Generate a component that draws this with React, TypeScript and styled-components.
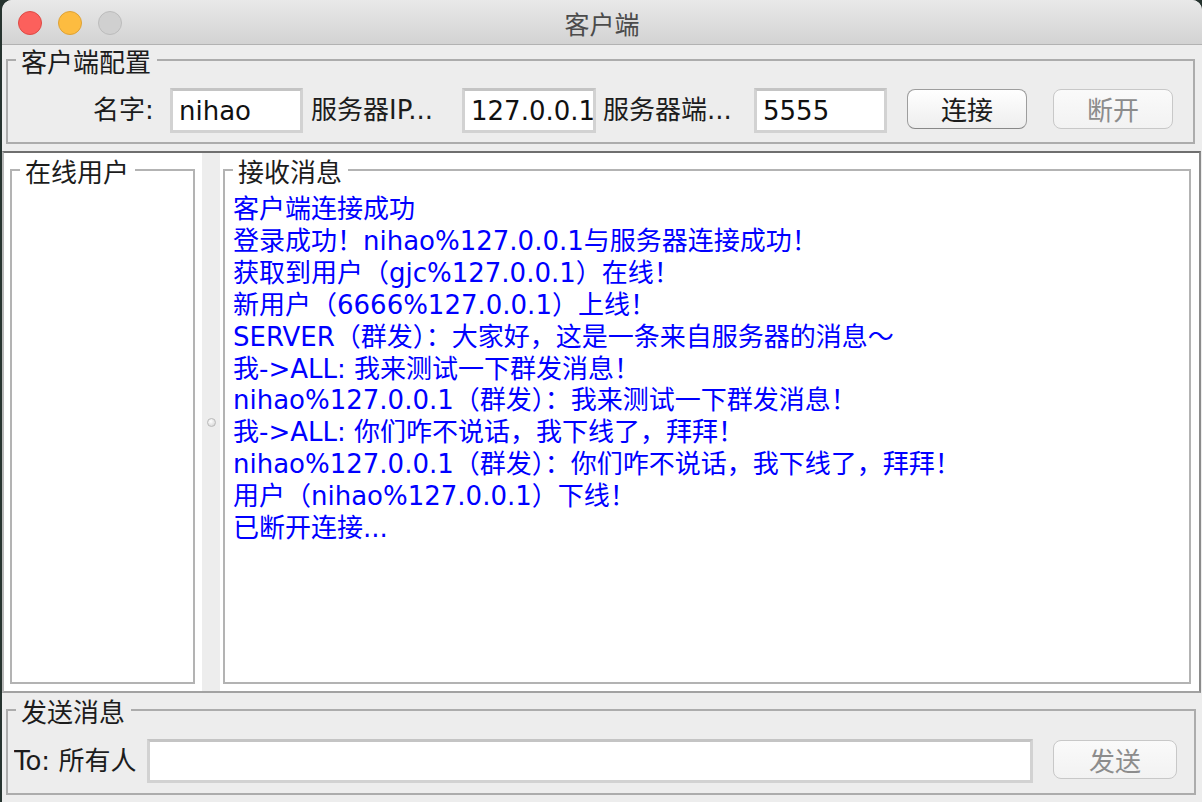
import React from 'react'
import styled, { createGlobalStyle } from 'styled-components'

const GlobalStyle = createGlobalStyle`
    html, body {
        margin: 0;
        padding: 0;
        background: #26332f;
    }
    body {
        font-family: "DejaVu Sans", "Noto Sans CJK SC", sans-serif;
        font-size: 26px;
        color: #1c1c1c;
    }
    * {
        box-sizing: border-box;
    }
`

const messages = [
    '客户端连接成功',
    '登录成功！nihao%127.0.0.1与服务器连接成功！',
    '获取到用户（gjc%127.0.0.1）在线！',
    '新用户（6666%127.0.0.1）上线！',
    'SERVER（群发）：大家好，这是一条来自服务器的消息～',
    '我->ALL: 我来测试一下群发消息！',
    'nihao%127.0.0.1（群发）：我来测试一下群发消息！',
    '我->ALL: 你们咋不说话，我下线了，拜拜！',
    'nihao%127.0.0.1（群发）：你们咋不说话，我下线了，拜拜！',
    '用户（nihao%127.0.0.1）下线！',
    '已断开连接...',
]

export default function App(): JSX.Element {
    return (
        <>
            <GlobalStyle />
            <Window>
                <TitleBar>
                    <Lights>
                        <Light $fill="#fc605c" $edge="#de4a45" />
                        <Light $fill="#fdbc40" $edge="#dea236" />
                        <Light $fill="#d0d0d0" $edge="#bcbcbc" />
                    </Lights>
                    <WindowTitle>客户端</WindowTitle>
                    <span />
                </TitleBar>

                <ConfigBox $bg="#ededed">
                    <BoxTitle $bg="#ededed">客户端配置</BoxTitle>
                    <ConfigRow>
                        <FieldLabel $w={77}>名字:</FieldLabel>
                        <TextInput $w={133} defaultValue="nihao" />
                        <FieldLabel $w={159} $pl={8}>服务器IP...</FieldLabel>
                        <TextInput $w={134} defaultValue="127.0.0.1" />
                        <FieldLabel $w={158} $pl={7}>服务器端...</FieldLabel>
                        <TextInput $w={133} defaultValue="5555" />
                        <Button $w={120} $ml={20}>连接</Button>
                        <Button $w={120} $ml={26} disabled>断开</Button>
                    </ConfigRow>
                </ConfigBox>

                <SplitPane>
                    <LeftPane>
                        <UsersBox $bg="#ffffff">
                            <BoxTitle $bg="#ffffff">在线用户</BoxTitle>
                        </UsersBox>
                    </LeftPane>
                    <Divider>
                        <Knob />
                    </Divider>
                    <RightPane>
                        <MessagesBox $bg="#ffffff">
                            <BoxTitle $bg="#ffffff">接收消息</BoxTitle>
                            <MessageList>
                                {messages.map((m, i) => (
                                    <MessageLine key={i}>{m}</MessageLine>
                                ))}
                            </MessageList>
                        </MessagesBox>
                    </RightPane>
                </SplitPane>

                <SendBox $bg="#ededed">
                    <BoxTitle $bg="#ededed">发送消息</BoxTitle>
                    <SendRow>
                        <FieldLabel $w={133}>To: 所有人</FieldLabel>
                        <TextInput $w={886} $h={44} />
                        <Button $w={124} $h={39} $ml={20} disabled>发送</Button>
                    </SendRow>
                </SendBox>
            </Window>
        </>
    )
}

const Window = styled.div`
    width: 1200px;
    height: 802px;
    margin-left: 2px;
    background: #ededed;
    border-radius: 10px 10px 0 0;
    overflow: hidden;
    display: flex;
    flex-direction: column;
`

const TitleBar = styled.div`
    height: 45px;
    flex: none;
    padding-top: 2px;
    display: grid;
    grid-template-columns: 1fr auto 1fr;
    align-items: center;
    background: linear-gradient(#e9e9e9, #d3d3d3);
    border-bottom: 1px solid #b2b2b2;
`

const Lights = styled.div`
    display: flex;
    gap: 16px;
    padding-left: 16px;
`

const Light = styled.span<{ $fill: string; $edge: string }>`
    width: 24px;
    height: 24px;
    border-radius: 50%;
    background: ${(p) => p.$fill};
    border: 1px solid ${(p) => p.$edge};
`

const WindowTitle = styled.div`
    font-family: "Noto Sans CJK SC", sans-serif;
    font-size: 25px;
    color: #4b4b4b;
`

const TitledBox = styled.div<{ $bg: string }>`
    position: relative;
    border: 2px solid #acacac;
    background: ${(p) => p.$bg};
`

const BoxTitle = styled.span<{ $bg: string }>`
    position: absolute;
    top: -12px;
    left: 8px;
    padding: 0 6px 0 5px;
    line-height: 28px;
    background: ${(p) => p.$bg};
    color: #1c1c1c;
    white-space: nowrap;
`

const ConfigBox = styled(TitledBox)`
    flex: none;
    height: 85px;
    margin: 14px 7px 0 4px;
    padding-top: 27px;
`

const ConfigRow = styled.div`
    display: flex;
    align-items: flex-start;
    padding-left: 85px;
`

const SendBox = styled(TitledBox)`
    flex: none;
    height: 86px;
    margin: 16px 6px 0 4px;
    padding-top: 28px;
`

const SendRow = styled.div`
    display: flex;
    align-items: flex-start;
    padding-left: 6px;
`

const FieldLabel = styled.span<{ $w: number; $pl?: number }>`
    flex: none;
    width: ${(p) => p.$w}px;
    padding-left: ${(p) => p.$pl ?? 0}px;
    height: 45px;
    line-height: 44px;
    white-space: nowrap;
    overflow: hidden;
    color: #1c1c1c;
`

const TextInput = styled.input<{ $w: number; $h?: number }>`
    flex: none;
    width: ${(p) => p.$w}px;
    height: ${(p) => p.$h ?? 45}px;
    border: 3px solid #d2d2d2;
    border-top-color: #c4c4c4;
    outline: none;
    background: #ffffff;
    padding: 0 0 0 6px;
    font: inherit;
    font-size: 26px;
    color: #111111;
`

const Button = styled.button<{ $w: number; $h?: number; $ml: number }>`
    flex: none;
    width: ${(p) => p.$w}px;
    height: ${(p) => p.$h ?? 40}px;
    margin-left: ${(p) => p.$ml}px;
    margin-top: 1px;
    padding: 0 0 4px;
    border-radius: 8px;
    border: 1px solid #9d9d9d;
    border-bottom-color: #888888;
    background: linear-gradient(#ffffff, #f6f6f6 50%, #eeeeee);
    font: inherit;
    font-size: 26px;
    color: #1c1c1c;

    &:disabled {
        border-color: #c8c8c8;
        background: linear-gradient(#fafafa, #f2f2f2);
        color: #8c8c8c;
    }
`

const SplitPane = styled.div`
    flex: none;
    height: 542px;
    margin: 7px 1px 0 0;
    display: flex;
    border-top: 2px solid #6f6f6f;
    border-right: 2px solid #8b8b8b;
    border-bottom: 2px solid #a2a2a2;
    border-left: 2px solid #b8b8b8;
`

const LeftPane = styled.div`
    width: 198px;
    flex: none;
    background: #ffffff;
    padding: 16px 7px 7px 6px;
    display: flex;
    flex-direction: column;
`

const UsersBox = styled(TitledBox)`
    flex: 1;
    border-color: #b3b3b3;
`

const Divider = styled.div`
    width: 18px;
    flex: none;
    background: #ededed;
    display: flex;
    align-items: center;
    justify-content: center;
`

const Knob = styled.span`
    width: 9px;
    height: 9px;
    border-radius: 50%;
    border: 1px solid #b9b9b9;
    background: radial-gradient(circle at 40% 35%, #ffffff, #cfcfcf);
`

const RightPane = styled.div`
    flex: 1;
    background: #ffffff;
    padding: 16px 8px 7px 3px;
    display: flex;
    flex-direction: column;
`

const MessagesBox = styled(TitledBox)`
    flex: 1;
    border-color: #b3b3b3;
`

const MessageList = styled.div`
    padding: 23px 0 0 8px;
`

const MessageLine = styled.div`
    line-height: 31.9px;
    color: #0000ff;
    white-space: nowrap;
`
